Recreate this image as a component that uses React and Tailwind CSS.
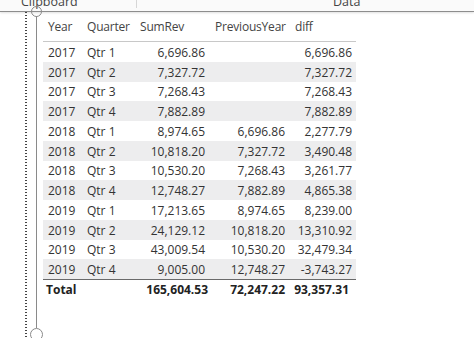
import React from "react";

const rows = [
  ["2017", "Qtr 1", "6,696.86", "", "6,696.86"],
  ["2017", "Qtr 2", "7,327.72", "", "7,327.72"],
  ["2017", "Qtr 3", "7,268.43", "", "7,268.43"],
  ["2017", "Qtr 4", "7,882.89", "", "7,882.89"],
  ["2018", "Qtr 1", "8,974.65", "6,696.86", "2,277.79"],
  ["2018", "Qtr 2", "10,818.20", "7,327.72", "3,490.48"],
  ["2018", "Qtr 3", "10,530.20", "7,268.43", "3,261.77"],
  ["2018", "Qtr 4", "12,748.27", "7,882.89", "4,865.38"],
  ["2019", "Qtr 1", "17,213.65", "8,974.65", "8,239.00"],
  ["2019", "Qtr 2", "24,129.12", "10,818.20", "13,310.92"],
  ["2019", "Qtr 3", "43,009.54", "10,530.20", "32,479.34"],
  ["2019", "Qtr 4", "9,005.00", "12,748.27", "-3,743.27"],
];

const cols = "grid grid-cols-[41px_53px_72px_82px_65px]";

function App() {
  return (
    <div
      className="w-[474px] h-[338px] bg-white overflow-hidden text-[#333] relative"
      style={{ fontFamily: '"Segoe UI", "Open Sans", sans-serif' }}
    >
      {/* ribbon strip */}
      <div className="h-[12px] flex border-b border-[#8d8d8d] shadow-[0_1px_2px_rgba(0,0,0,0.12)] bg-[#fafafa] text-[12.5px] leading-[12px] text-[#444]">
        <div className="w-[137px] border-r border-[#d6d6d6] h-[8px] pl-[21px]">
          <div className="-mt-[4px]">Clipboard</div>
        </div>
        <div className="pl-[196px]">
          <div className="-mt-[4px]">Data</div>
        </div>
      </div>

      <div className="flex">
        {/* selection gutter */}
        <div className="w-[43px] h-[326px] relative shrink-0">
          <div className="absolute left-[25px] top-0 h-full w-[2px] bg-[repeating-linear-gradient(to_bottom,#444_0_1px,transparent_1px_3px)]" />
          <div className="absolute left-[36px] top-[4px] h-[312px] border-l border-[#8a8a8a]" />
          <div className="absolute left-[31px] -top-[6px] w-[11px] h-[11px] rounded-full border border-[#8a8a8a] bg-transparent" />
          <div className="absolute left-[30px] top-[316px] w-[13px] h-[13px] rounded-full border border-[#8a8a8a] bg-white" />
        </div>

        {/* table */}
        <div className="w-[313px] text-[12px] leading-[16px]">
          <div className={`${cols} h-[30px] items-center border-b border-[#c8c8c8] text-[#444] tracking-[-0.2px] pt-[1px]`}>
            <div className="pl-[5px]">Year</div>
            <div className="pl-[3px]">Quarter</div>
            <div className="pl-[3px]">SumRev</div>
            <div className="pl-[6px]">PreviousYear</div>
            <div className="pl-[4px]">diff</div>
          </div>
          {rows.map((r, i) => (
            <div
              key={i}
              className={`${cols} h-[19.75px] items-center pt-[2px] ${i % 2 ? "bg-[#ededee]" : "bg-white"}`}
            >
              <div className="pl-[5px]">{r[0]}</div>
              <div className="pl-[3px]">{r[1]}</div>
              <div className="text-right pr-[4px]">{r[2]}</div>
              <div className="text-right pr-[6px]">{r[3]}</div>
              <div className="text-right pr-[4px]">{r[4]}</div>
            </div>
          ))}
          <div className={`${cols} h-[19px] items-center border-t border-[#6a6a6a] font-bold text-[#222] pt-[1px]`}>
            <div className="pl-[3px]">Total</div>
            <div />
            <div className="text-right pr-[1px]">165,604.53</div>
            <div className="text-right pr-[6px]">72,247.22</div>
            <div className="text-right pr-[7px]">93,357.31</div>
          </div>
        </div>
      </div>
    </div>
  );
}

export default App;
